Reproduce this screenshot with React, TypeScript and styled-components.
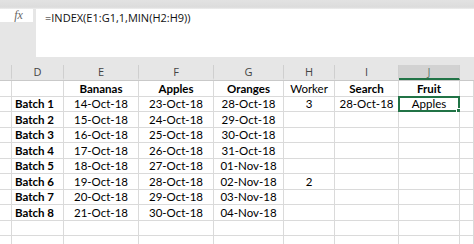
import React from 'react';
import styled, { createGlobalStyle } from 'styled-components';

const GlobalStyle = createGlobalStyle`
  html, body {
    margin: 0;
    padding: 0;
    background: #ffffff;
    width: 474px;
    height: 244px;
    overflow: hidden;
  }
`;

const COLS = [12, 52, 75, 75, 70, 51, 64, 61, 14];
const LETTERS = ['', 'D', 'E', 'F', 'G', 'H', 'I', 'J', ''];
const ROW_H = 15.5;

type Cell = { text?: string; bold?: boolean; align?: 'left' | 'center' };

const fruitRow: Cell[] = [
  {},
  {},
  { text: 'Bananas', bold: true },
  { text: 'Apples', bold: true },
  { text: 'Oranges', bold: true },
  { text: 'Worker' },
  { text: 'Search', bold: true },
  { text: 'Fruit', bold: true },
  {},
];

const dates = [
  ['14-Oct-18', '23-Oct-18', '28-Oct-18'],
  ['15-Oct-18', '24-Oct-18', '29-Oct-18'],
  ['16-Oct-18', '25-Oct-18', '30-Oct-18'],
  ['17-Oct-18', '26-Oct-18', '31-Oct-18'],
  ['18-Oct-18', '27-Oct-18', '01-Nov-18'],
  ['19-Oct-18', '28-Oct-18', '02-Nov-18'],
  ['20-Oct-18', '29-Oct-18', '03-Nov-18'],
  ['21-Oct-18', '30-Oct-18', '04-Nov-18'],
];

// worker / search / fruit values on some batch rows
const extra: Record<number, [string, string, string]> = {
  0: ['3', '28-Oct-18', 'Apples'],
  5: ['2', '', ''],
};

const rows: Cell[][] = [
  fruitRow,
  ...dates.map((d, i) => {
    const x = extra[i] || ['', '', ''];
    return [
      {},
      { text: `Batch ${i + 1}`, bold: true, align: 'left' as const },
      { text: d[0] },
      { text: d[1] },
      { text: d[2] },
      { text: x[0] },
      { text: x[1] },
      { text: x[2] },
      {},
    ];
  }),
  COLS.map(() => ({})),
  COLS.map(() => ({})),
];

const Sheet = styled.div`
  width: 474px;
  height: 244px;
  overflow: hidden;
  background: #ffffff;
`;

const TopStrip = styled.div`
  height: 9px;
  background: linear-gradient(#e2e2e2, #dcdcdc 80%, #efefef);
`;

const FormulaBar = styled.div`
  display: flex;
  height: 48px;
  background: #e6e6e6;
`;

const FxBox = styled.div`
  width: 33px;
  height: 13px;
  background: #ffffff;
  display: flex;
  align-items: center;
  justify-content: center;
  font-family: 'Liberation Serif', serif;
  font-style: italic;
  font-size: 12px;
  color: #666666;
  padding-left: 4px;
  box-sizing: border-box;
`;

const FormulaInput = styled.div`
  flex: 1;
  margin-left: 3px;
  background: #ffffff;
  padding: 2px 0 0 9px;
  font-family: 'Open Sans', sans-serif;
  font-size: 11px;
  color: #111111;
  line-height: 14px;
`;

const HeaderBand = styled.div`
  background: #e6e6e6;
  padding-top: 8px;
  border-bottom: 1px solid #c9c9c9;
  display: grid;
  grid-template-columns: ${COLS.map((c) => `${c}px`).join(' ')};
`;

const ColHeader = styled.div<{ $selected?: boolean; $edge?: boolean }>`
  height: 15px;
  box-sizing: border-box;
  border-right: 1px solid ${(p) => (p.$edge ? 'transparent' : '#cfcfcf')};
  background: ${(p) => (p.$selected ? '#d2d2d2' : 'transparent')};
  border-bottom: 2px solid ${(p) => (p.$selected ? '#217346' : 'transparent')};
  display: flex;
  align-items: center;
  justify-content: center;
  font-family: 'Open Sans', sans-serif;
  font-size: 11px;
  color: ${(p) => (p.$selected ? '#5f7a6a' : '#444444')};
`;

const Grid = styled.div`
  display: grid;
  grid-template-columns: ${COLS.map((c) => `${c}px`).join(' ')};
  grid-auto-rows: ${ROW_H}px;
`;

const GridCell = styled.div<{ $bold?: boolean; $align?: 'left' | 'center' }>`
  position: relative;
  box-sizing: border-box;
  border-right: 1px solid #dadada;
  border-bottom: 1px solid #dadada;
  display: flex;
  align-items: center;
  justify-content: ${(p) => (p.$align === 'left' ? 'flex-start' : 'center')};
  padding-left: ${(p) => (p.$align === 'left' ? '3px' : '0')};
  font-family: Lato, 'Liberation Sans', sans-serif;
  font-size: 11.5px;
  font-weight: ${(p) => (p.$bold ? 700 : 400)};
  color: #000000;
  white-space: nowrap;
`;

const Selection = styled.div`
  position: absolute;
  inset: -1px -1px -1px -1px;
  border: 2px solid #217346;
  pointer-events: none;
`;

const Handle = styled.div`
  position: absolute;
  right: -3px;
  bottom: -3px;
  width: 5px;
  height: 5px;
  background: #217346;
  border: 1px solid #ffffff;
  box-sizing: border-box;
`;

export default function App() {
  return (
    <>
      <GlobalStyle />
      <Sheet>
        <TopStrip />
        <FormulaBar>
          <FxBox>fx</FxBox>
          <FormulaInput>=INDEX(E1:G1,1,MIN(H2:H9))</FormulaInput>
        </FormulaBar>
        <HeaderBand>
          {LETTERS.map((l, i) => (
            <ColHeader key={i} $selected={l === 'J'} $edge={i === COLS.length - 1}>
              {l}
            </ColHeader>
          ))}
        </HeaderBand>
        <Grid>
          {rows.map((r, ri) =>
            r.map((c, ci) => (
              <GridCell key={`${ri}-${ci}`} $bold={c.bold} $align={c.align}>
                {c.text}
                {ri === 1 && ci === 7 && (
                  <Selection>
                    <Handle />
                  </Selection>
                )}
              </GridCell>
            ))
          )}
        </Grid>
      </Sheet>
    </>
  );
}
